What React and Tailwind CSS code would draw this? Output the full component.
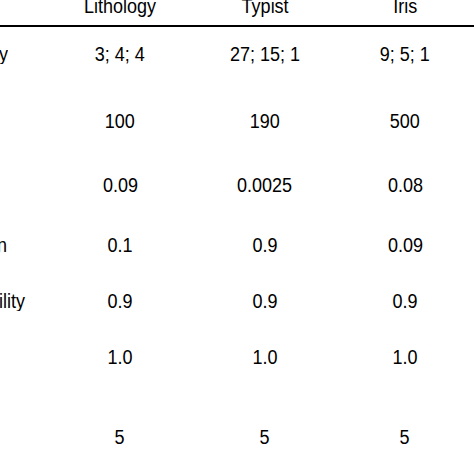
const COLS = ['Lithology', 'Typist', 'Iris']

const ROWS = [
  { label: 'y', shift: '-ml-[1px]', h: 'h-[67px]', values: ['3; 4; 4', '27; 15; 1', '9; 5; 1'] },
  { label: '', h: 'h-[64px]', values: ['100', '190', '500'] },
  { label: '', h: 'h-[60px]', values: ['0.09', '0.0025', '0.08'] },
  { label: 'n', shift: '-ml-[3px]', h: 'h-[56px]', values: ['0.1', '0.9', '0.09'] },
  { label: 'ility', shift: '-ml-[1px]', h: 'h-[56px]', values: ['0.9', '0.9', '0.9'] },
  { label: '', h: 'h-[80px]', values: ['1.0', '1.0', '1.0'] },
  { label: '', h: 'h-[30px]', values: ['5', '5', '5'] },
]

const GRID = 'grid grid-cols-[46px_148px_142px_138px]'

function Cell({ children }) {
  return (
    <div className="flex justify-center">
      <span className="inline-block scale-x-90 whitespace-nowrap">{children}</span>
    </div>
  )
}

export default function App() {
  return (
    <div
      className="w-[474px] h-[474px] overflow-hidden bg-white text-black text-[20px] leading-[20px]"
      style={{ fontFamily: '"Liberation Sans", Arial, sans-serif' }}
    >
      {/* Header (top is cropped in the source) */}
      <div className={`${GRID} -mt-[4px] pb-[9px]`}>
        <div />
        {COLS.map((c) => (
          <Cell key={c}>{c}</Cell>
        ))}
      </div>
      <div className="h-[2px] bg-black" />

      {/* Body */}
      <div className="pt-[17px]">
        {ROWS.map((r, i) => (
          <div key={i} className={`${GRID} ${r.h} items-start`}>
            <div className="overflow-hidden whitespace-nowrap">
              <span className={`inline-block origin-left scale-x-90 ${r.shift || ''}`}>{r.label}</span>
            </div>
            {r.values.map((v, j) => (
              <Cell key={j}>{v}</Cell>
            ))}
          </div>
        ))}
      </div>
    </div>
  )
}
